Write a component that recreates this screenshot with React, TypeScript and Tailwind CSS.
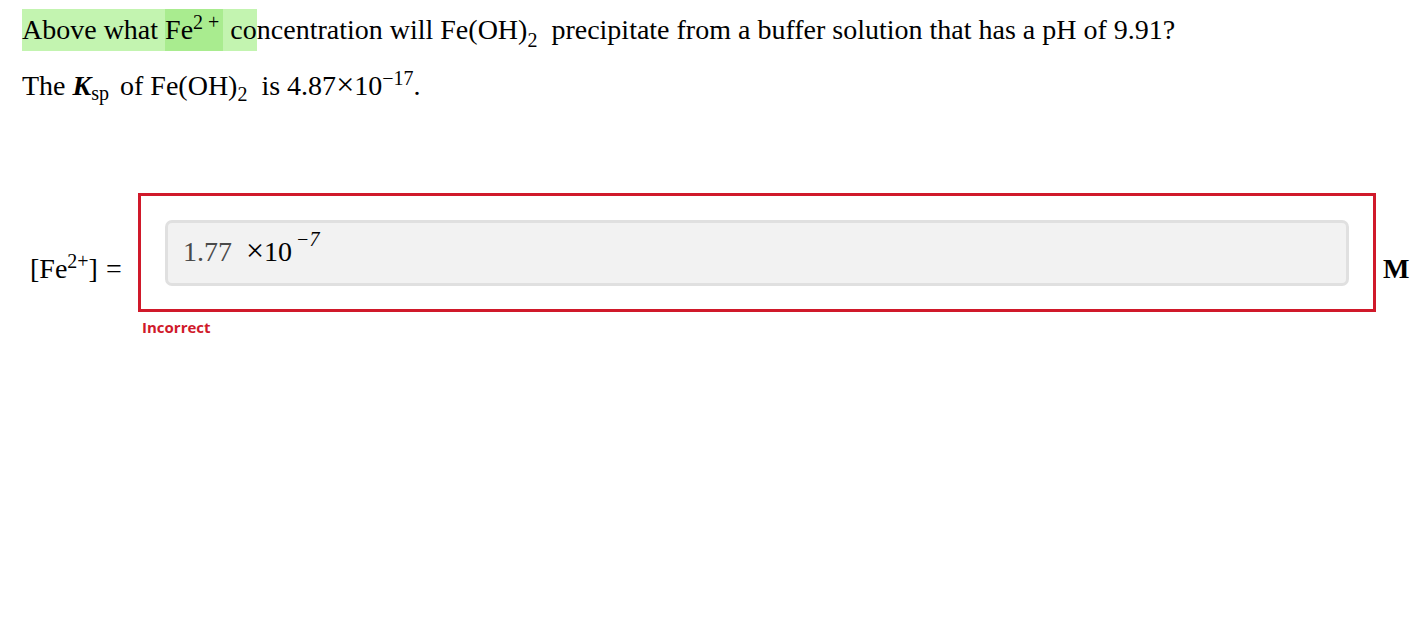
export default function App() {
  return (
    <div className="min-h-[620px] bg-white font-['Liberation_Serif',serif] text-black">
      {/* Question text */}
      <div className="pl-[22px] pt-[9px]">
        <p className="text-[28px] leading-[42px] whitespace-nowrap">
          <span className="inline-block bg-[#c3f4b0]">
            Above what{" "}
            <span className="inline-block bg-[#a9ec8f] pr-[4px]">
              Fe<sup className="text-[20px]">2 +</sup>
            </span>
            &nbsp;co
          </span>
          ncentration will Fe(OH)<sub className="relative top-[8px] text-[20px]">2</sub>&nbsp; precipitate from a buffer solution that has a pH of 9.91?
        </p>
        <p className="mt-[14px] text-[28px] leading-[42px] whitespace-nowrap">
          The <i className="font-bold">K</i>
          <sub className="text-[20px]">sp</sub>{" "}
          <span className="ml-[4px]">of Fe(OH)</span>
          <sub className="relative top-[6px] text-[20px]">2</sub>&nbsp; is 4.87
          <span className="text-[32px] leading-none">×</span>10<sup className="text-[20px]">−17</sup>.
        </p>
      </div>

      {/* Answer row */}
      <div className="mt-[86px] flex items-start">
        <div className="ml-[30px] mt-[60px] w-[108px] text-[28px] leading-[32px] whitespace-nowrap">
          [Fe<sup className="text-[20px]">2+</sup>]<span className="ml-[8px]">=</span>
        </div>
        <div className="flex flex-col">
          <div className="w-[1238px] h-[119px] border-[3px] border-[#d0192a] pl-[24px] pr-[24px] pt-[24px]">
            <div className="h-[66px] rounded-[7px] border-[3px] border-[#e0e0e0] bg-[#f2f2f2] pl-[15px] pt-[11px] text-[28px] leading-[32px] text-[#4a4a4a]">
              1.77&nbsp;{" "}
              <span className="text-black">
                <span className="text-[32px] leading-none">×</span>10<sup className="relative -top-[15px] ml-[4px] italic text-[20px]">−7</sup>
              </span>
            </div>
          </div>
          <div className="mt-[4px] pl-[4px] font-['Open_Sans',sans-serif] text-[15px] font-bold text-[#d0192a]">
            Incorrect
          </div>
        </div>
        <div className="ml-[7px] mt-[60px] text-[28px] leading-[32px] font-bold">M</div>
      </div>
    </div>
  );
}
